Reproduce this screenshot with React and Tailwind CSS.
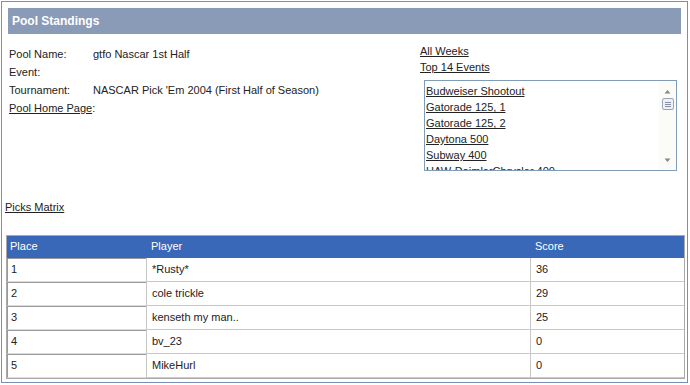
import React from "react";

const events = [
  "Budweiser Shootout",
  "Gatorade 125, 1",
  "Gatorade 125, 2",
  "Daytona 500",
  "Subway 400",
  "UAW-DaimlerChrysler 400",
];

const rows = [
  { place: 1, player: "*Rusty*", score: 36 },
  { place: 2, player: "cole trickle", score: 29 },
  { place: 3, player: "kenseth my man..", score: 25 },
  { place: 4, player: "bv_23", score: 0 },
  { place: 5, player: "MikeHurl", score: 0 },
];

export default function App() {
  return (
    <div
      className="w-[690px] h-[385px] bg-white overflow-hidden text-[11px] text-[#222]"
      style={{ fontFamily: '"Liberation Sans", Arial, sans-serif' }}
    >
      <div className="ml-px mt-px w-[687px] h-[382px] border border-[#7a8fb8] flex flex-col">
        {/* header bar */}
        <div className="mx-[6px] mt-[6px] h-[26px] bg-[#8a9bb8] flex items-center pl-[4px]">
          <span className="text-white font-bold text-[12px]">Pool Standings</span>
        </div>

        {/* pool info */}
        <div className="flex mt-[11px]">
          <div className="w-[417px] pl-[7px] flex flex-col">
            <div className="flex h-[18px] items-center">
              <span className="w-[84px]">Pool Name:</span>
              <span>gtfo Nascar 1st Half</span>
            </div>
            <div className="flex h-[18px] items-center">
              <span className="w-[84px]">Event:</span>
            </div>
            <div className="flex h-[18px] items-center">
              <span className="w-[84px]">Tournament:</span>
              <span>NASCAR Pick 'Em 2004 (First Half of Season)</span>
            </div>
            <div className="flex h-[18px] items-center">
              <span>
                <span className="underline">Pool Home Page</span>:
              </span>
            </div>
          </div>

          <div className="flex flex-col pl-[1px] -mt-[2px]">
            <span className="underline h-[16px] leading-[16px]">All Weeks</span>
            <span className="underline h-[16px] leading-[16px]">Top 14 Events</span>
            <div className="mt-[5px] ml-[4px] w-[253px] h-[91px] border border-[#7f9db9] flex">
              <div className="flex-1 overflow-hidden pl-[1px] pt-[2px]">
                {events.map((e) => (
                  <div key={e} className="h-[16px] leading-[16px] underline whitespace-nowrap">
                    {e}
                  </div>
                ))}
              </div>
              <div className="w-[17px] bg-[#fbfbf8] flex flex-col items-center pt-[3px]">
                <svg width="7" height="5" viewBox="0 0 7 5" className="mt-[5px]">
                  <path d="M0.5 4.5 L3.5 1 L6.5 4.5 Z" fill="#888" />
                </svg>
                <div className="mt-[4px] w-[12px] h-[12px] border border-[#9aa4b8] rounded-[2px] bg-[#eef0f6] flex flex-col items-center justify-center gap-[1px]">
                  <div className="w-[6px] h-px bg-[#8890a0]" />
                  <div className="w-[6px] h-px bg-[#8890a0]" />
                  <div className="w-[6px] h-px bg-[#8890a0]" />
                </div>
                <div className="flex-1" />
                <svg width="7" height="5" viewBox="0 0 7 5" className="mb-[7px]">
                  <path d="M0.5 0.5 L3.5 4 L6.5 0.5 Z" fill="#888" />
                </svg>
              </div>
            </div>
          </div>
        </div>

        {/* picks matrix */}
        <div className="mt-[28px] pl-[3px]">
          <span className="underline">Picks Matrix</span>
        </div>

        {/* standings table */}
        <div className="mt-[19px] ml-[4px] w-[679px] border border-[#aaaaaa]">
          <div className="flex h-[22px] bg-[#3a68b8] text-white items-center">
            <div className="w-[139px] pl-[3px]">Place</div>
            <div className="w-[384px] pl-[5px]">Player</div>
            <div className="flex-1 pl-[5px]">Score</div>
          </div>
          {rows.map((r) => (
            <div key={r.place} className="flex h-[24px]">
              <div className="w-[139px] border-t border-l border-[#999] border-b-[#ddd] border-b pl-[3px] flex items-center">
                {r.place}
              </div>
              <div className="w-[384px] border-l border-b border-[#c8c8c8] pl-[5px] flex items-center">
                {r.player}
              </div>
              <div className="flex-1 border-l border-b border-[#c8c8c8] pl-[5px] flex items-center">
                {r.score}
              </div>
            </div>
          ))}
        </div>
      </div>
    </div>
  );
}
